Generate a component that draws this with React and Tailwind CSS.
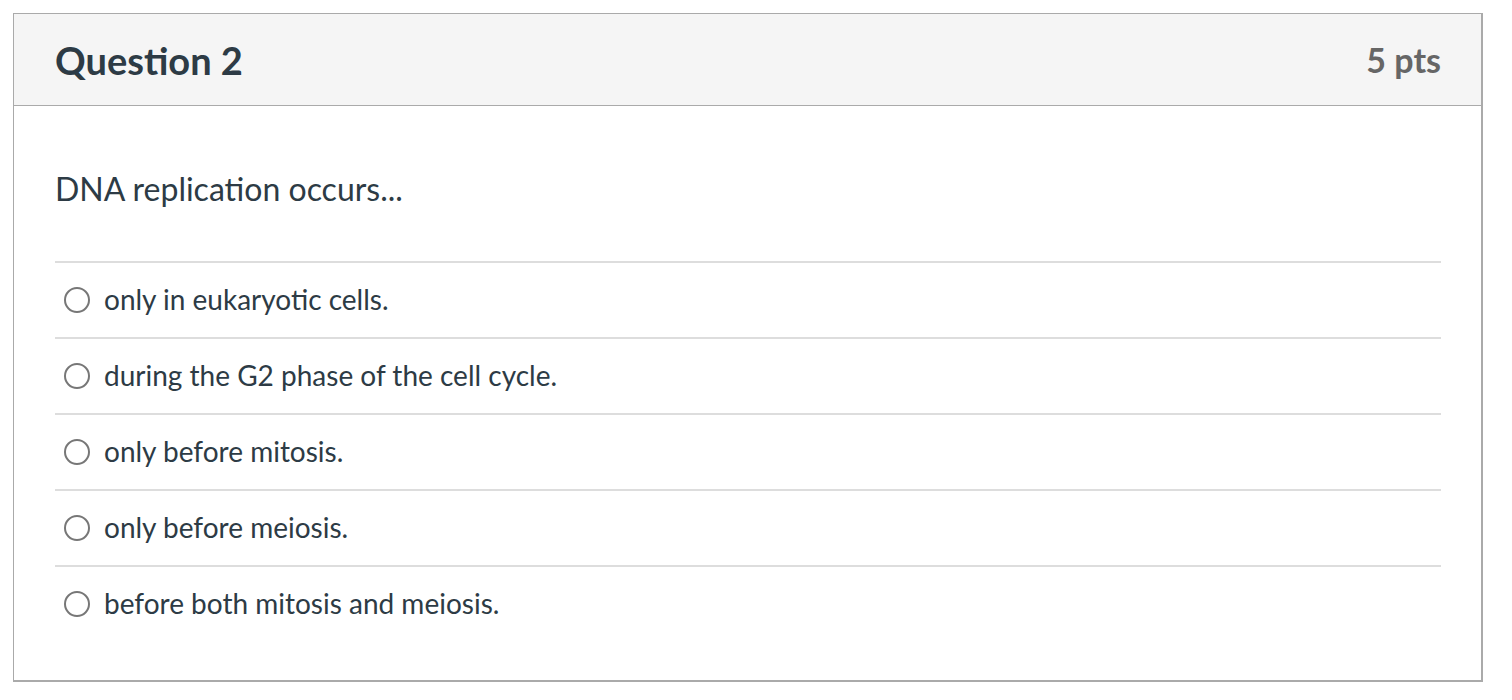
const answers = [
  'only in eukaryotic cells.',
  'during the G2 phase of the cell cycle.',
  'only before mitosis.',
  'only before meiosis.',
  'before both mitosis and meiosis.',
];

function Radio() {
  return (
    <span className="w-[26px] h-[26px] rounded-full border-2 border-[#777] bg-white shrink-0" />
  );
}

export default function App() {
  return (
    <div className="min-h-screen bg-white p-[13px]" style={{ fontFamily: 'Lato, "Noto Sans", sans-serif' }}>
      <div className="w-[1470px] border border-[#aaa] border-r-2 border-b-2 text-[#2d3b45]">
        {/* header */}
        <div className="h-[92px] bg-[#f5f5f5] border-b border-[#aaa] pl-[41px] pr-[40px] flex items-center justify-between">
          <h2 className="text-[38px] font-bold leading-none">Question 2</h2>
          <span className="text-[34px] font-bold leading-none text-[#666]">5 pts</span>
        </div>

        {/* body */}
        <div className="pl-[41px] pr-[40px] pb-[39px]">
          <p className="pt-[65px] pb-[54px] text-[32px] leading-[36px]">DNA replication occurs...</p>
          {answers.map((a) => (
            <div key={a} className="h-[76px] border-t-2 border-[#ddd] flex items-center gap-[14px] pl-[9px]">
              <Radio />
              <span className="text-[28px] leading-none pb-[2px]">{a}</span>
            </div>
          ))}
        </div>
      </div>
    </div>
  );
}
